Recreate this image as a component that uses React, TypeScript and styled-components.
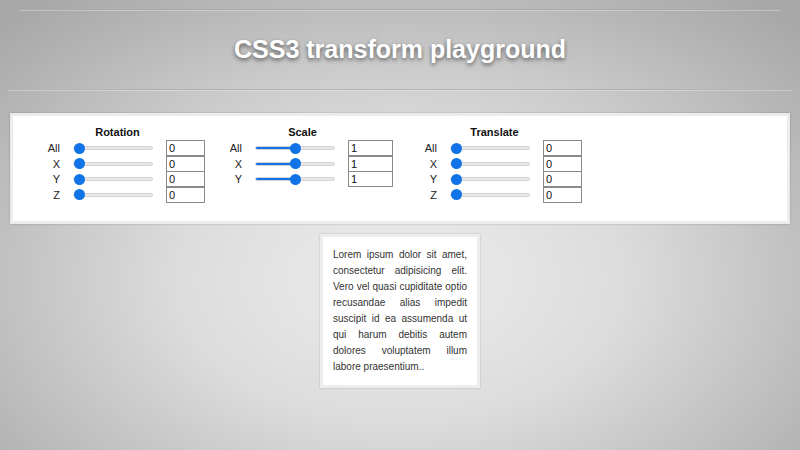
import styled, { createGlobalStyle } from "styled-components";

const GlobalStyle = createGlobalStyle`
  html, body {
    margin: 0;
    padding: 0;
  }
  body {
    font-family: "Liberation Sans", Arial, sans-serif;
    color: #222;
  }
`;

const Page = styled.div`
  min-height: 450px;
  background: radial-gradient(ellipse 70% 80% at 50% 62%, #ededed 0%, #dcdcdc 40%, #b4b4b4 85%, #a8a8a8 100%);
  overflow: hidden;
`;

const Header = styled.header`
  padding-top: 9px;
`;

const Rule = styled.div<{ $inset: number }>`
  height: 1px;
  margin: 0 ${(p) => p.$inset}px;
  background: linear-gradient(to right, rgba(160,160,160,0), rgba(160,160,160,0.6) 20%, rgba(160,160,160,0.6) 80%, rgba(160,160,160,0));
  box-shadow: 0 1px 0 rgba(255,255,255,0.3);
`;

const Title = styled.h1`
  margin: 0;
  height: 79px;
  display: flex;
  align-items: center;
  justify-content: center;
  font-size: 25px;
  font-weight: bold;
  color: #fff;
  text-shadow: 0 2px 4px rgba(0,0,0,0.55);
`;

const Panel = styled.section`
  margin: 23px 10px 0;
  background: #fff;
  border: 3px solid #ececec;
  box-shadow: 0 0 2px rgba(0,0,0,0.25);
  padding: 8px 0 19px 17px;
  display: flex;
  align-items: flex-start;
`;

const Group = styled.div<{ $shift: number }>`
  margin-left: ${(p) => p.$shift}px;
  display: flex;
  flex-direction: column;
`;

const Heading = styled.div`
  text-align: center;
  font-size: 11px;
  font-weight: bold;
  line-height: 16px;
  color: #111;
`;

const Row = styled.label<{ $inputWidth: number }>`
  display: grid;
  grid-template-columns: 30px 80px ${(p) => p.$inputWidth}px;
  column-gap: 13px;
  align-items: center;
  height: 15.6px;
`;

const Axis = styled.span`
  text-align: right;
  font-size: 11px;
  color: #222;
`;

const Slider = styled.input`
  -webkit-appearance: none;
  appearance: none;
  width: 80px;
  height: 11px;
  margin: 0;
  background: transparent;

  &::-webkit-slider-runnable-track {
    height: 4px;
    border-radius: 3px;
    border: 1px solid #d4d4d4;
    background: var(--track);
  }

  &::-webkit-slider-thumb {
    -webkit-appearance: none;
    appearance: none;
    width: 11px;
    height: 11px;
    margin-top: -4.5px;
    border-radius: 50%;
    background: #1273e6;
    border: none;
  }
`;

const Value = styled.input`
  box-sizing: border-box;
  width: 100%;
  height: 16px;
  margin: 0;
  padding: 0 2px;
  border: 1px solid #8a8a8a;
  font-family: "Liberation Sans", Arial, sans-serif;
  font-size: 11px;
  color: #111;
  background: #fff;
`;

const Card = styled.article`
  width: 134px;
  margin: 10px auto 0;
  background: #fff;
  border: 3px solid #ededed;
  box-shadow: 0 0 2px rgba(0,0,0,0.2);
  padding: 10px 10px 10px;
`;

const Body = styled.p`
  margin: 0;
  font-size: 10px;
  line-height: 16px;
  text-align: justify;
  color: #333;
`;

type Control = {
  title: string;
  shift: number;
  inputWidth: number;
  axes: string[];
  min: number;
  max: number;
  value: number;
};

const controls: Control[] = [
  { title: "Rotation", shift: 0, inputWidth: 39, axes: ["All", "X", "Y", "Z"], min: 0, max: 360, value: 0 },
  { title: "Scale", shift: 7, inputWidth: 45, axes: ["All", "X", "Y"], min: 0, max: 2, value: 1 },
  { title: "Translate", shift: 14, inputWidth: 39, axes: ["All", "X", "Y", "Z"], min: 0, max: 200, value: 0 },
];

const trackFill = (c: Control) => {
  const pct = ((c.value - c.min) / (c.max - c.min)) * 100;
  return `linear-gradient(to right, #1273e6 ${pct}%, #e9e9e9 ${pct}%)`;
};

export default function App() {
  return (
    <Page>
      <GlobalStyle />
      <Header>
        <Rule $inset={20} />
        <Title>CSS3 transform playground</Title>
        <Rule $inset={8} />
      </Header>

      <Panel>
        {controls.map((c) => (
          <Group key={c.title} $shift={c.shift}>
            <Heading>{c.title}</Heading>
            {c.axes.map((a) => (
              <Row key={a} $inputWidth={c.inputWidth}>
                <Axis>{a}</Axis>
                <Slider
                  type="range"
                  min={c.min}
                  max={c.max}
                  step={0.01}
                  defaultValue={c.value}
                  style={{ ["--track" as string]: trackFill(c) }}
                />
                <Value type="text" defaultValue={String(c.value)} />
              </Row>
            ))}
          </Group>
        ))}
      </Panel>

      <Card>
        <Body>
          Lorem ipsum dolor sit amet, consectetur adipisicing elit. Vero vel quasi cupiditate optio
          recusandae alias impedit suscipit id ea assumenda ut qui harum debitis autem dolores
          voluptatem illum labore praesentium..
        </Body>
      </Card>
    </Page>
  );
}
